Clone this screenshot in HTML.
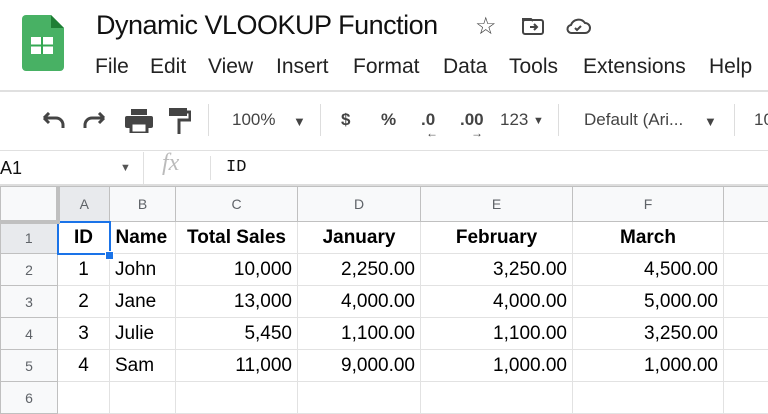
<!DOCTYPE html><html><head><style>
body{margin:0;width:768px;height:414px;overflow:hidden;background:#fff;font-family:"Liberation Sans",sans-serif;position:relative}
.a{position:absolute;white-space:nowrap}
.g{border-collapse:collapse;position:absolute;left:0;top:186px;table-layout:fixed;width:783px}
.g td{border:1px solid #e2e2e2;height:32px;padding:0 5px;font-size:19px;color:#000;overflow:hidden;white-space:nowrap;box-sizing:border-box}
.g td.h{background:#f8f9fa;color:#5f6368;font-size:14px;text-align:center;border-color:#c0c0c0}
.r{text-align:right}.c{text-align:center}.b{font-weight:bold}
.tb{color:#444;font-size:17px;top:110px}
</style></head><body>
<svg class="a" style="left:22px;top:15px" width="42" height="56" viewBox="0 0 42 56"><path d="M4 0h25l13 13v39a4 4 0 0 1-4 4H4a4 4 0 0 1-4-4V4a4 4 0 0 1 4-4z" fill="#34a853" opacity=".9"/><path d="M29 0l13 13H29z" fill="#1e7e34"/><rect x="9" y="22" width="22" height="17" fill="#fff"/><rect x="19" y="22" width="2" height="17" fill="#34a853"/><rect x="9" y="29.5" width="22" height="2" fill="#34a853"/></svg>
<div class="a" style="left:96px;top:10px;font-size:27px;color:#111;letter-spacing:-0.5px">Dynamic VLOOKUP Function</div>
<div class="a" style="left:475px;top:12px;font-size:24px;color:#444">☆</div>
<svg class="a" style="left:522px;top:17px" width="22" height="18"><rect x="1" y="3" width="20" height="14" rx="2" fill="none" stroke="#444" stroke-width="2"/><path d="M1 4V2h8l2 2" fill="none" stroke="#444" stroke-width="2"/><path d="M8 10h7M12 7l3 3-3 3" fill="none" stroke="#444" stroke-width="2"/></svg>
<svg class="a" style="left:565px;top:17px" width="26" height="18"><path d="M7 16h13a5 5 0 0 0 0-10 8 8 0 0 0-14 2 4 4 0 0 0 1 8z" fill="none" stroke="#444" stroke-width="2"/><path d="M10 11l2 2 4-4" fill="none" stroke="#444" stroke-width="2"/></svg>
<div class="a" style="left:95px;top:55px;font-size:21px;color:#222">
<span class="a" style="left:0">File</span><span class="a" style="left:55px">Edit</span><span class="a" style="left:113px">View</span><span class="a" style="left:181px">Insert</span><span class="a" style="left:258px">Format</span><span class="a" style="left:348px">Data</span><span class="a" style="left:414px">Tools</span><span class="a" style="left:488px">Extensions</span><span class="a" style="left:614px">Help</span></div>
<div class="a" style="left:0;top:90px;width:768px;height:2px;background:#e0e0e0"></div>
<svg class="a" style="left:40px;top:112px" width="70" height="18"><path d="M4 6h12a7 7 0 0 1 7 7v3M4 6l5-5M4 6l5 5" fill="none" stroke="#444" stroke-width="3"/><path d="M64 6H52a7 7 0 0 0-7 7v3M64 6l-5-5M64 6l-5 5" fill="none" stroke="#444" stroke-width="3"/></svg>
<svg class="a" style="left:125px;top:109px" width="28" height="24"><rect x="6" y="0" width="16" height="6" fill="#444"/><rect x="0" y="7" width="28" height="12" rx="2" fill="#444"/><rect x="6" y="14" width="16" height="10" fill="#fff" stroke="#444" stroke-width="3"/></svg>
<svg class="a" style="left:169px;top:108px" width="22" height="26"><rect x="0" y="0" width="18" height="8" fill="#444"/><path d="M18 4h3v8H10v14" fill="none" stroke="#444" stroke-width="3"/></svg>
<div class="a" style="left:208px;top:104px;width:1px;height:32px;background:#ddd"></div>
<div class="a tb" style="left:232px">100%</div><div class="a tb" style="left:293px;font-size:13px;top:114px">▼</div>
<div class="a" style="left:320px;top:104px;width:1px;height:32px;background:#ddd"></div>
<div class="a tb" style="left:341px;font-weight:bold">$</div>
<div class="a tb" style="left:381px;font-weight:bold">%</div>
<div class="a tb" style="left:421px;font-weight:bold">.0</div>
<div class="a tb" style="left:460px;font-weight:bold">.00</div>
<div class="a tb" style="left:500px">123</div><div class="a tb" style="left:533px;font-size:11px;top:115px">▼</div>
<div class="a" style="left:426px;top:126px;font-size:12px;color:#444">←</div>
<div class="a" style="left:471px;top:126px;font-size:12px;color:#444">→</div>
<div class="a" style="left:558px;top:104px;width:1px;height:32px;background:#ddd"></div>
<div class="a tb" style="left:584px">Default (Ari...</div><div class="a tb" style="left:704px;font-size:13px;top:114px">▼</div>
<div class="a" style="left:734px;top:104px;width:1px;height:32px;background:#ddd"></div>
<div class="a tb" style="left:754px">10</div>
<div class="a" style="left:0;top:150px;width:768px;height:1px;background:#e0e0e0"></div>
<div class="a" style="left:0;top:158px;font-size:18px;color:#111">A1</div>
<div class="a" style="left:120px;top:162px;font-size:11px;color:#555">▼</div>
<div class="a" style="left:143px;top:152px;width:1px;height:32px;background:#e0e0e0"></div>
<div class="a" style="left:162px;top:150px;font-size:24px;color:#bbb;font-family:'Liberation Serif',serif;font-style:italic">fx</div>
<div class="a" style="left:210px;top:156px;width:1px;height:24px;background:#e0e0e0"></div>
<div class="a" style="left:226px;top:158px;font-size:17px;font-family:'Liberation Mono',monospace;color:#111">ID</div>
<div class="a" style="left:0;top:184px;width:768px;height:2px;background:#ddd"></div>
<table class="g">
<colgroup><col style="width:57px"><col style="width:52px"><col style="width:66px"><col style="width:122px"><col style="width:123px"><col style="width:152px"><col style="width:151px"><col style="width:60px"></colgroup>
<tr><td class="h" style="border-right:4px solid #c0c0c0;border-bottom:4px solid #c0c0c0;height:35px"></td><td class="h" style="background:#e8eaed">A</td><td class="h">B</td><td class="h">C</td><td class="h">D</td><td class="h">E</td><td class="h">F</td><td class="h"></td></tr>
<tr><td class="h" style="background:#e8eaed">1</td><td class="c b" style="border:2px solid #1a73e8">ID</td><td class="b">Name</td><td class="b c">Total Sales</td><td class="b c">January</td><td class="b c">February</td><td class="b c">March</td><td></td></tr>
<tr><td class="h">2</td><td class="c">1</td><td>John</td><td class="r">10,000</td><td class="r">2,250.00</td><td class="r">3,250.00</td><td class="r">4,500.00</td><td></td></tr>
<tr><td class="h">3</td><td class="c">2</td><td>Jane</td><td class="r">13,000</td><td class="r">4,000.00</td><td class="r">4,000.00</td><td class="r">5,000.00</td><td></td></tr>
<tr><td class="h">4</td><td class="c">3</td><td>Julie</td><td class="r">5,450</td><td class="r">1,100.00</td><td class="r">1,100.00</td><td class="r">3,250.00</td><td></td></tr>
<tr><td class="h">5</td><td class="c">4</td><td>Sam</td><td class="r">11,000</td><td class="r">9,000.00</td><td class="r">1,000.00</td><td class="r">1,000.00</td><td></td></tr>
<tr><td class="h">6</td><td></td><td></td><td></td><td></td><td></td><td></td><td></td></tr>
</table>
<div class="a" style="left:105px;top:251px;width:7px;height:7px;background:#1a73e8;border:1px solid #fff"></div>
</body></html>
